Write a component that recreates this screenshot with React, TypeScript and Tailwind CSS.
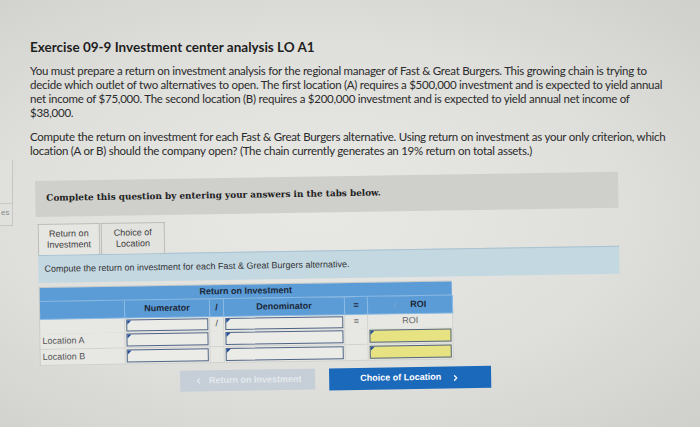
import React from 'react';
import { ChevronLeft, ChevronRight } from 'lucide-react';

const para = '[font-family:Lato,"Open_Sans",sans-serif]';

const InputCell: React.FC<{ yellow?: boolean }> = ({ yellow }) => (
  <div className="h-full p-[1px]">
    <div
      className={`relative h-full border-[1.5px] border-[#506585] ${yellow ? 'bg-[#e8e382]' : 'bg-[#ebebe8]'}`}
    >
      <span className="absolute left-0 top-0 h-0 w-0 border-t-[4px] border-r-[4px] border-t-[#23509c] border-r-transparent" />
    </div>
  </div>
);

const cols = 'grid grid-cols-[85px_85px_14px_121px_23px_85px]';
const head = 'bg-[#5b9cd6] border-r border-b border-[#8dbbe4] flex items-center justify-center font-bold text-[9px] text-[#1b2738]';
const body = 'bg-[#e7e7e4] border-r border-b border-[#d0d0cd] text-[9px] text-[#444]';

const RoiTable: React.FC = () => (
  <div className="ml-[2px] mt-[4px] w-[413px] [font-family:'Liberation_Sans',Arial,sans-serif] border-l border-t border-[#c9c9c6]">
    <div className="h-[14px] bg-[#5b9cd6] border-b border-[#8dbbe4] flex items-center justify-center font-bold text-[9px] text-[#1b2738]">
      Return on Investment
    </div>
    <div className={`${cols} h-[18px]`}>
      <div className={head} />
      <div className={head}>Numerator</div>
      <div className={head}>/</div>
      <div className={head}>Denominator</div>
      <div className={head}>=</div>
      <div className={head}>
        <span className="mr-[14px] text-[#7fa9cf] font-normal">/</span>ROI
      </div>
    </div>
    <div className={`${cols} h-[14px]`}>
      <div className={body} />
      <div className={body}><InputCell /></div>
      <div className={`${body} flex items-center justify-center`}>/</div>
      <div className={body}><InputCell /></div>
      <div className={`${body} flex items-center justify-center`}>=</div>
      <div className={`${body} flex items-center justify-center text-[#666]`}>ROI</div>
    </div>
    {['Location A', 'Location B'].map((name) => (
      <div key={name} className={`${cols} h-[16px]`}>
        <div className={`${body} flex items-center pl-[2px] text-[#555]`}>{name}</div>
        <div className={body}><InputCell /></div>
        <div className={body} />
        <div className={body}><InputCell /></div>
        <div className={body} />
        <div className={body}><InputCell yellow /></div>
      </div>
    ))}
  </div>
);

export default function App() {
  return (
    <div className="relative w-[700px] h-[427px] overflow-hidden bg-[radial-gradient(ellipse_at_45%_50%,_#e8e8e5_0%,_#dfdfdc_55%,_#cfcfcc_100%)] flex">
      {/* cut-off sidebar on the left */}
      <div className="w-[13px] shrink-0 pt-[160px]">
        <div className="h-[66px] border-r border-b border-[#c6c6c3] bg-[#e0e0dd] flex flex-col">
          <div className="h-[44px] border-b border-[#c9c9c6]" />
          <div className="text-[8px] text-[#8a8a8a] [font-family:'Liberation_Sans',sans-serif] pl-[1px] pt-[3px]">es</div>
        </div>
      </div>

      <div className="pl-[17px] pt-[38px] flex-1">
        <h1 className={`${para} font-bold text-[13.5px] leading-[18px] text-[#1f1f1f]`}>
          Exercise 09-9 Investment center analysis LO A1
        </h1>

        <div className={`${para} mt-[8px] text-[11.5px] tracking-[-0.26px] leading-[14px] text-[#2b2b2b] whitespace-nowrap`}>
          <div>You must prepare a return on investment analysis for the regional manager of Fast &amp; Great Burgers. This growing chain is trying to</div>
          <div>decide which outlet of two alternatives to open. The first location (A) requires a $500,000 investment and is expected to yield annual</div>
          <div>net income of $75,000. The second location (B) requires a $200,000 investment and is expected to yield annual net income of</div>
          <div>$38,000.</div>
        </div>

        <div className={`${para} mt-[10px] text-[11.5px] tracking-[-0.26px] leading-[14px] text-[#2b2b2b] whitespace-nowrap`}>
          <div>Compute the return on investment for each Fast &amp; Great Burgers alternative. Using return on investment as your only criterion, which</div>
          <div>location (A or B) should the company open? (The chain currently generates an 19% return on total assets.)</div>
        </div>

        <div className="mt-[23px] ml-[5px] w-[583px] origin-top-left -rotate-[0.9deg]">
          <div className="h-[36px] bg-[#cfcfcc] flex items-center pl-[11px] [font-family:'DejaVu_Serif',Georgia,serif] font-bold text-[8.9px] text-[#222]">
            Complete this question by entering your answers in the tabs below.
          </div>

          <div className="mt-[7px] ml-[2px] flex gap-[1px] items-end [font-family:'Liberation_Sans',Arial,sans-serif] text-[9px] leading-[11px] text-[#3c3c3c]">
            <div className="w-[62px] h-[31px] bg-[#e6e6e3] border border-b-0 border-[#bcbcb9] flex items-center justify-center text-center">
              Return on<br />Investment
            </div>
            <div className="w-[64px] h-[31px] bg-[#e2e2df] border border-b-0 border-[#bcbcb9] flex items-center justify-center text-center">
              Choice of<br />Location
            </div>
          </div>

          <div className="ml-[2px] h-[28px] bg-[#c4d8e2] border-t border-[#a9c2cf] flex items-center pl-[6px] [font-family:'Liberation_Sans',Arial,sans-serif] text-[9px] text-[#333]">
            Compute the return on investment for each Fast &amp; Great Burgers alternative.
          </div>

          <RoiTable />

          <div className="mt-[7px] ml-[142px] flex gap-[14px] [font-family:'Liberation_Sans',Arial,sans-serif] font-bold text-[9px]">
            <div className="w-[135px] h-[21px] bg-[#c6cfd7] text-[#e4e9ed] flex items-center justify-center gap-[6px]">
              <ChevronLeft size={9} strokeWidth={3} />
              Return on Investment
            </div>
            <div className="w-[162px] h-[22px] bg-[#1b69bb] text-white flex items-center justify-center gap-[10px]">
              Choice of Location
              <ChevronRight size={9} strokeWidth={3.5} />
            </div>
          </div>
        </div>
      </div>
    </div>
  );
}
